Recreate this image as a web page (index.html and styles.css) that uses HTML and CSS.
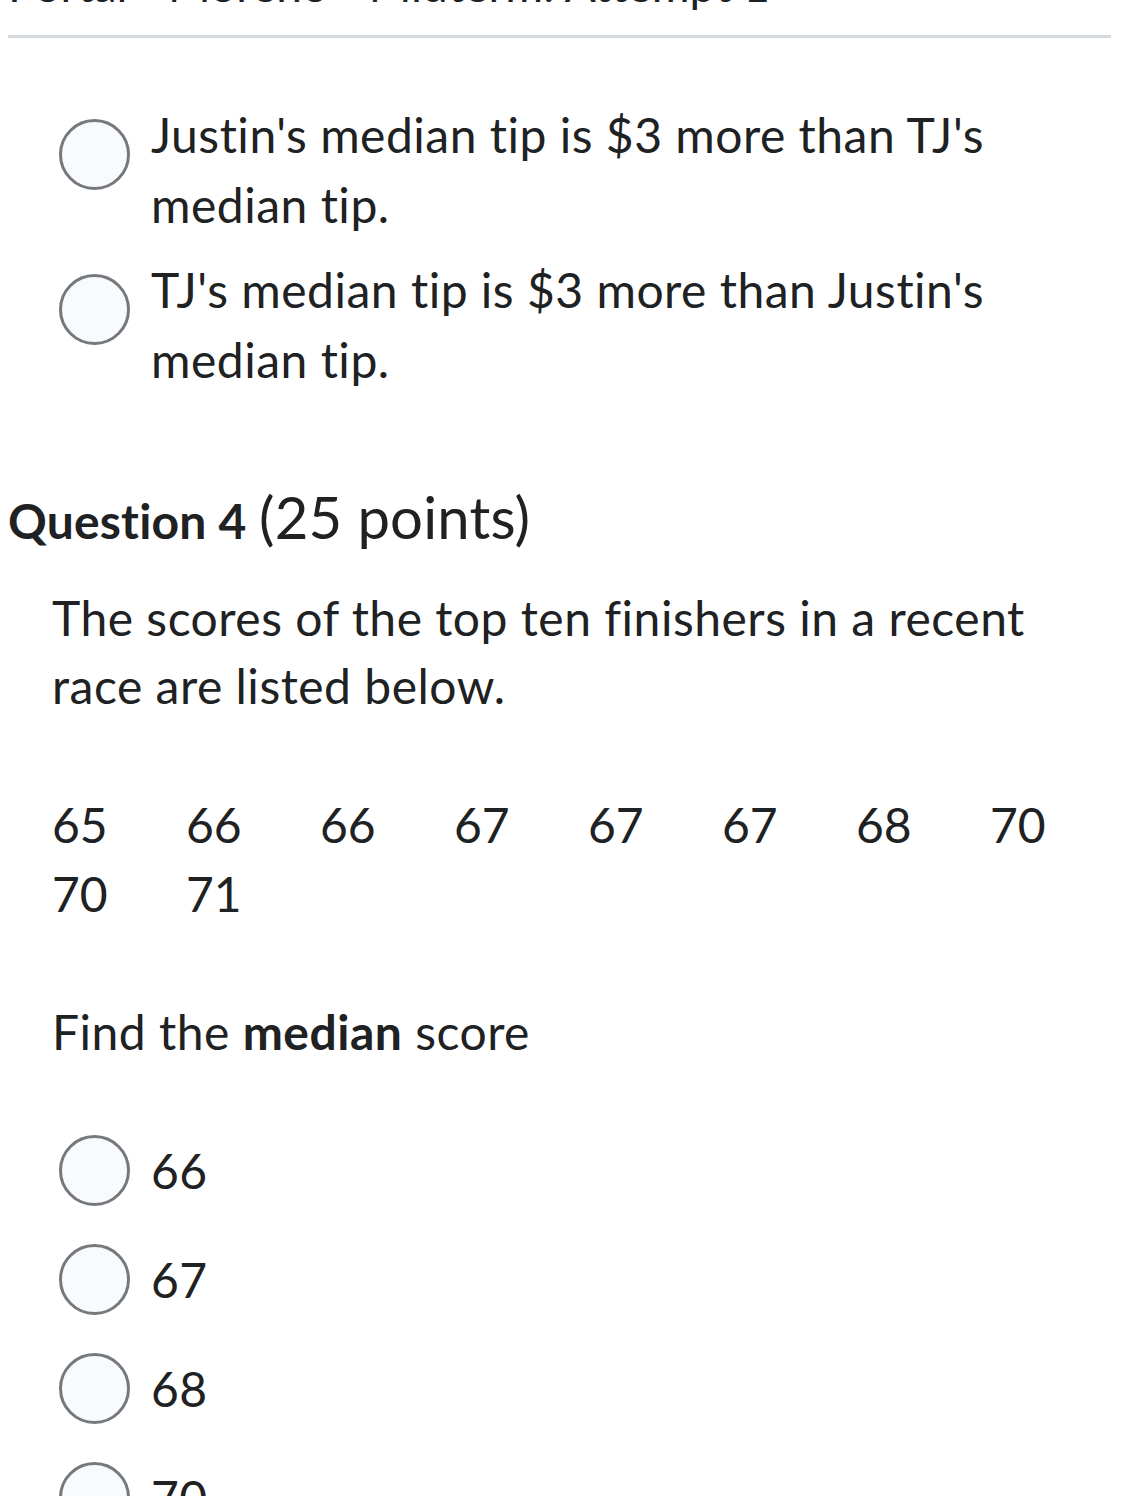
FILE: index.html
```html
<!DOCTYPE html>
<html lang="en">
<head>
    <meta charset="UTF-8">
    <meta name="viewport" content="width=device-width, initial-scale=1.0">
    <title>Midterm: Attempt 1</title>
    <link rel="stylesheet" href="styles.css">
</head>
<body>

    <div class="page">
        <!-- Quiz title (scrolled mostly out of view) -->
        <h1 class="quiz-title">Portal - Moreno - Midterm: Attempt 1</h1>
        <hr class="divider">

        <!-- End of question 3 choices -->
        <div class="choices choices-wide">
            <label class="choice">
                <span class="radio"></span>
                <span class="choice-text">Justin's median tip is $3 more than TJ's median tip.</span>
            </label>
            <label class="choice">
                <span class="radio"></span>
                <span class="choice-text">TJ's median tip is $3 more than Justin's median tip.</span>
            </label>
        </div>

        <!-- Question 4 -->
        <h2 class="question-title"><strong>Question 4</strong> <span class="points">(25 points)</span></h2>

        <div class="question-body">
            <p class="prompt">The scores of the top ten finishers in a recent race are listed below.</p>

            <div class="scores">
                <span>65</span>
                <span>66</span>
                <span>66</span>
                <span>67</span>
                <span>67</span>
                <span>67</span>
                <span>68</span>
                <span>70</span>
                <span>70</span>
                <span>71</span>
            </div>

            <p class="prompt find">Find the <strong>median</strong> score</p>
        </div>

        <div class="choices choices-short">
            <label class="choice">
                <span class="radio"></span>
                <span class="choice-text">66</span>
            </label>
            <label class="choice">
                <span class="radio"></span>
                <span class="choice-text">67</span>
            </label>
            <label class="choice">
                <span class="radio"></span>
                <span class="choice-text">68</span>
            </label>
            <label class="choice">
                <span class="radio"></span>
                <span class="choice-text">70</span>
            </label>
        </div>
    </div>

</body>
</html>
```

FILE: styles.css
```css
/* Reset default margin/padding */
* {
    margin: 0;
    padding: 0;
    box-sizing: border-box;
}

body {
    font-family: Lato, "Noto Sans", sans-serif;
    color: #202122;
    background: #fff;
    font-variant-ligatures: none;
    letter-spacing: 0.5px;
    overflow: hidden;
}

.page {
    padding: 0 18px 0 8px;
}

/* Title sits above the top of the window */
.quiz-title {
    font-size: 46px;
    font-weight: 400;
    line-height: 52px;
    margin-top: -41px;
    letter-spacing: 0;
    white-space: nowrap;
}

.divider {
    border: none;
    height: 3px;
    background: #d3d9dc;
    margin-top: 24px;
}

/* Radio choices */
.choices {
    display: flex;
    flex-direction: column;
}

.choice {
    display: flex;
    align-items: flex-start;
    gap: 21px;
    padding-left: 51px;
    font-size: 48px;
}

.radio {
    flex: none;
    width: 71px;
    height: 71px;
    border: 3px solid #75797c;
    border-radius: 50%;
    background: #f9fafe;
}

.choices-wide {
    margin-top: 62px;
    gap: 15px;
}

.choices-wide .choice-text {
    line-height: 70px;
    max-width: 900px;
}

.choices-wide .radio {
    margin-top: 19px;
}

.choices-short {
    margin-top: 69px;
    gap: 38px;
}

.choices-short .choice {
    align-items: center;
}

.choices-short .choice-text {
    line-height: 70px;
}

/* Question header */
.question-title {
    margin-top: 90px;
    font-size: 48px;
    font-weight: 400;
    line-height: 64px;
    letter-spacing: 0.2px;
}

.question-title strong {
    font-weight: 700;
}

.points {
    font-size: 58px;
}

.question-body {
    padding-left: 44px;
}

.prompt {
    font-size: 48px;
    line-height: 68px;
    margin-top: 31px;
    max-width: 1030px;
}

.prompt strong {
    font-weight: 700;
}

.scores {
    display: flex;
    flex-wrap: wrap;
    column-gap: 80px;
    max-width: 1060px;
    margin-top: 70px;
    font-size: 48px;
    line-height: 69px;
    letter-spacing: 0;
}

.scores span {
    width: 54px;
}

.find {
    margin-top: 70px;
}
```
